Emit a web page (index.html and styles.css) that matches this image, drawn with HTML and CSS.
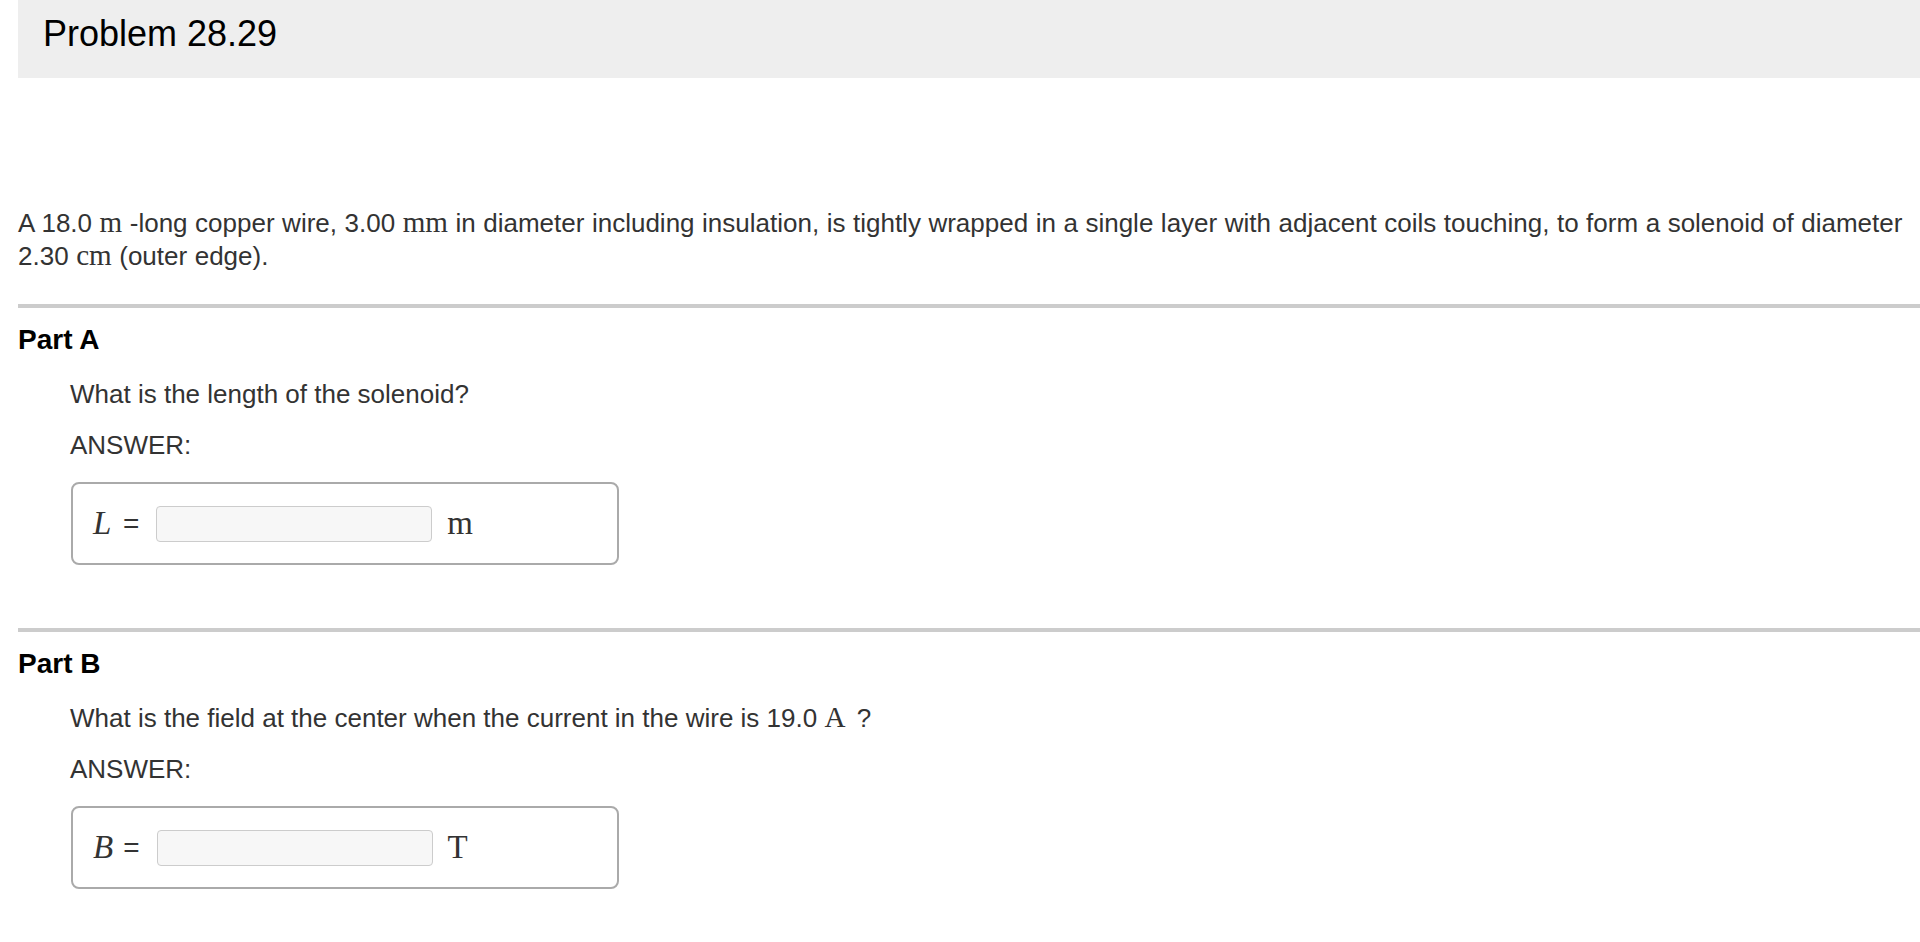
FILE: index.html
```html
<!DOCTYPE html>
<html lang="en">
<head>
<meta charset="utf-8">
<title>Problem 28.29</title>
<link rel="stylesheet" href="styles.css">
</head>
<body>
<div class="page">
  <div class="title-bar"><h2 class="title">Problem 28.29</h2></div>

  <p class="intro"><span>A 18.0 </span><span class="math">m</span><span> -long copper wire, 3.00 </span><span class="math">mm</span><span> in diameter including insulation, is tightly wrapped in a single layer with adjacent coils touching, to form a solenoid of diameter</span><br><span>2.30 </span><span class="math">cm</span><span> (outer edge).</span></p>

  <div class="part">
    <h3 class="part-title">Part A</h3>
    <p class="question">What is the length of the solenoid?</p>
    <p class="answer-label">ANSWER:</p>
    <div class="answer-box">
      <span class="var">L</span><span class="eq">=</span>
      <span class="input"></span>
      <span class="unit">m</span>
    </div>
  </div>

  <div class="part">
    <h3 class="part-title">Part B</h3>
    <p class="question">What is the field at the center when the current in the wire is 19.0 <span class="math math-end">A</span> ?</p>
    <p class="answer-label">ANSWER:</p>
    <div class="answer-box">
      <span class="var">B</span><span class="eq">=</span>
      <span class="input"></span>
      <span class="unit">T</span>
    </div>
  </div>
</div>
</body>
</html>
```

FILE: styles.css
```css
html, body {
  margin: 0;
  padding: 0;
  background: #ffffff;
}

.page {
  padding-left: 18px;
  font-family: "Liberation Sans", Arial, Helvetica, sans-serif;
  color: #333333;
}

.title-bar {
  background: #eeeeee;
  height: 78px;
  box-sizing: border-box;
  padding: 14px 0 0 25px;
}

.title {
  margin: 0;
  font-size: 36px;
  line-height: 40px;
  font-weight: normal;
  color: #000000;
}

.intro {
  margin: 129px 0 0 0;
  font-size: 26px;
  line-height: 33px;
  word-spacing: 0.3px;
  white-space: nowrap;
}

.math {
  font-family: "Liberation Serif", "Times New Roman", serif;
  font-size: 1.12em;
  line-height: 1;
}

.math-end {
  margin-right: 4px;
}

.part {
  border-top: 4px solid #cccccc;
  margin-top: 31px;
}

.part + .part {
  margin-top: 63px;
}

.part-title {
  margin: 15px 0 0 0;
  font-size: 28px;
  line-height: 33px;
  font-weight: bold;
  color: #000000;
}

.question {
  margin: 22px 0 0 52px;
  font-size: 26px;
  line-height: 33px;
}

.answer-label {
  margin: 18px 0 0 52px;
  font-size: 26px;
  line-height: 33px;
}

.answer-box {
  margin: 20px 0 0 53px;
  width: 548px;
  height: 83px;
  box-sizing: border-box;
  border: 2px solid #aaaaaa;
  border-radius: 8px;
  display: flex;
  align-items: center;
  padding-left: 20px;
}

.var {
  min-width: 20px;
  font-family: "Liberation Serif", "Times New Roman", serif;
  font-style: italic;
  font-size: 33px;
  color: #333333;
}

.eq {
  font-size: 28px;
  margin-left: 10px;
  color: #333333;
}

.input {
  display: block;
  width: 276px;
  height: 36px;
  box-sizing: border-box;
  margin-left: 17px;
  border: 1px solid #cccccc;
  border-radius: 4px;
  background: #f7f7f7;
}

.unit {
  font-family: "Liberation Serif", "Times New Roman", serif;
  font-size: 33px;
  margin-left: 15px;
  color: #333333;
}
```
